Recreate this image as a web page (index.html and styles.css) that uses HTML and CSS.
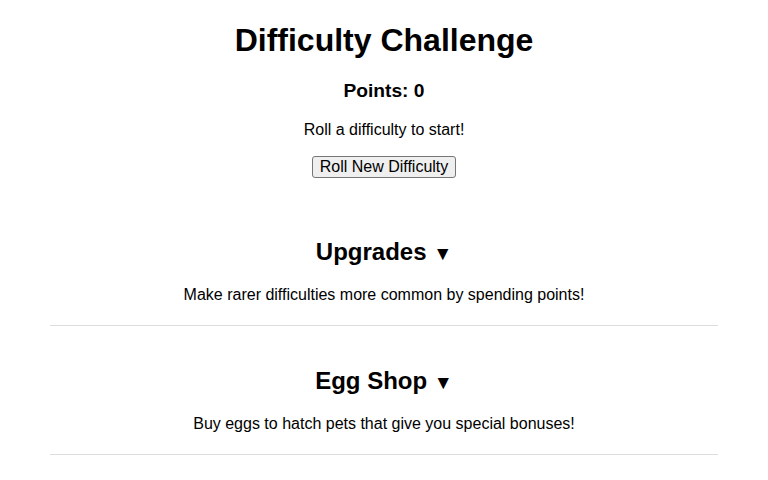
FILE: index.html
```html
<!DOCTYPE html>
<html lang="en">
<head>
<meta charset="utf-8">
<title>Difficulty Challenge</title>
<link rel="stylesheet" href="styles.css">
</head>
<body>
  <header class="game">
    <h1 class="title">Difficulty Challenge</h1>
    <h3 class="points">Points: <span id="points">0</span></h3>
    <p class="status">Roll a difficulty to start!</p>
    <div class="actions">
      <button class="roll-btn" type="button">Roll New Difficulty</button>
    </div>
  </header>

  <section class="panel">
    <h2 class="panel-title">Upgrades <span class="caret">▼</span></h2>
    <p class="panel-desc">Make rarer difficulties more common by spending points!</p>
  </section>

  <section class="panel">
    <h2 class="panel-title">Egg Shop <span class="caret">▼</span></h2>
    <p class="panel-desc">Buy eggs to hatch pets that give you special bonuses!</p>
  </section>
</body>
</html>
```
FILE: styles.css
```css
body {
  margin: 0;
  font-family: "Liberation Sans", Arial, sans-serif;
  color: #000;
  background: #fff;
  text-align: center;
}

.title {
  font-size: 32px;
  margin: 21.5px 0 21.44px;
}

.points {
  font-size: 19.2px;
  margin: 18.72px 0 19px;
}

.status {
  font-size: 16px;
  margin: 16px 0 17.5px;
}

.actions {
  margin-bottom: 18.5px;
}

.roll-btn {
  font-family: "Liberation Sans", Arial, sans-serif;
  font-size: 16px;
  padding: 1px 7px;
  color: #000;
  background: #efefef;
  border: 1px solid #767676;
  border-radius: 3px;
}

.panel {
  margin: 0 50px;
  padding: 21px 0 5px;
  border-bottom: 1px solid #ddd;
}

.panel-title {
  font-size: 24px;
  margin: 19.92px 0 20px;
}

.caret {
  font-size: 0.8em;
}

.panel-desc {
  font-size: 16px;
  margin: 16px 0;
}
```
